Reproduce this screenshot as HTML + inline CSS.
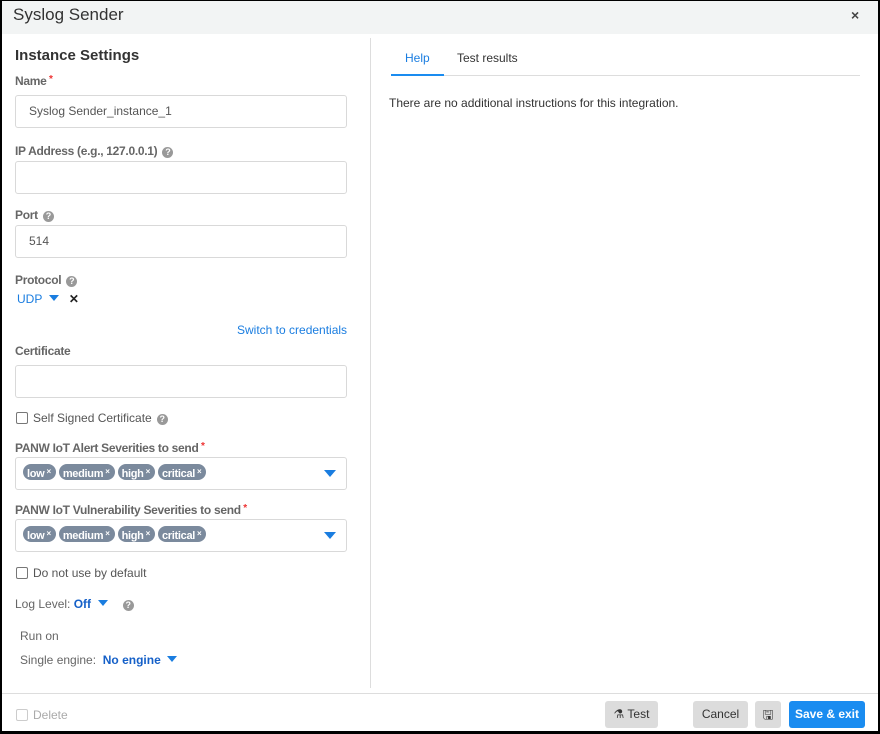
<!DOCTYPE html>
<html><head><meta charset="utf-8"><style>
*{box-sizing:border-box;margin:0;padding:0}
body{width:880px;height:734px;background:#000;position:relative;font-family:"Liberation Sans",sans-serif;overflow:hidden}
.win{position:absolute;left:2px;top:1px;width:876px;height:730px;background:#fff}
.hdr{position:absolute;left:0;top:0;width:876px;height:33px;background:#f2f4f4}
.a{position:absolute;white-space:nowrap}
.lbl{font-size:12px;color:#666;font-weight:bold;letter-spacing:-0.3px}
.in{position:absolute;left:13px;width:332px;height:33px;border:1px solid #d9d9d9;border-radius:3px;font-size:12px;color:#555;padding:8px 13px}
.q{display:inline-block;width:11px;height:11px;border-radius:50%;background:#999;color:#fff;font-size:9px;text-align:center;line-height:11px;font-weight:bold;vertical-align:0px;margin-left:5px}
.cb{display:inline-block;width:12px;height:12px;border:1px solid #777;border-radius:2px;vertical-align:-2px;margin-right:5px}
.tri{display:inline-block;width:0;height:0;border-left:5px solid transparent;border-right:5px solid transparent;border-top:6px solid #1a7de0;vertical-align:2px}
.tag{display:inline-block;background:#7b8a9d;color:#fff;font-size:11px;font-weight:bold;border-radius:8px;padding:1px 5px 1px 4px;margin-right:3px;letter-spacing:-0.3px;height:16px;line-height:14px}
.tag i{font-style:normal;font-size:8px;vertical-align:3px;margin-left:2px}
.btn{position:absolute;top:700px;height:27px;border-radius:3px;background:#dcdcdc;font-size:12px;color:#333;text-align:center;line-height:27px}
</style></head><body>
<div class="win">
<div class="hdr"></div>
<div class="a" style="left:11px;top:4px;font-size:17px;color:#333">Syslog Sender</div>
<div class="a" style="left:849px;top:6px;font-size:14px;color:#444;font-weight:bold">×</div>
<div class="a" style="left:368px;top:37px;width:1px;height:650px;background:#ddd"></div>
<div class="a" style="left:13px;top:46px;font-size:15px;font-weight:bold;color:#333">Instance Settings</div>
<div class="a lbl" style="left:13px;top:73px">Name<span style="color:#e33;vertical-align:3px;font-size:10px"> *</span></div>
<div class="in" style="top:94px">Syslog Sender_instance_1</div>
<div class="a lbl" style="left:13px;top:143px">IP Address (e.g., 127.0.0.1)<span class="q">?</span></div>
<div class="in" style="top:160px"></div>
<div class="a lbl" style="left:13px;top:207px">Port<span class="q">?</span></div>
<div class="in" style="top:224px">514</div>
<div class="a lbl" style="left:13px;top:272px">Protocol<span class="q">?</span></div>
<div class="a" style="left:15px;top:291px;font-size:12px;color:#1a7de0">UDP &nbsp;<span class="tri"></span> &nbsp; <span style="color:#222;font-weight:bold">✕</span></div>
<div class="a" style="left:235px;top:322px;font-size:12px;color:#1a7de0">Switch to credentials</div>
<div class="a lbl" style="left:13px;top:343px">Certificate</div>
<div class="in" style="top:364px"></div>
<div class="a" style="left:14px;top:410px;font-size:12px;color:#555"><span class="cb"></span>Self Signed Certificate<span class="q">?</span></div>
<div class="a lbl" style="left:13px;top:440px">PANW IoT Alert Severities to send<span style="color:#e33;font-size:10px;vertical-align:3px"> *</span></div>
<div class="in" style="top:456px;padding:6px 7px"><span class="tag">low<i>×</i></span><span class="tag">medium<i>×</i></span><span class="tag">high<i>×</i></span><span class="tag">critical<i>×</i></span><span class="tri" style="position:absolute;right:10px;top:12px;border-width:7px 6px 0 6px"></span></div>
<div class="a lbl" style="left:13px;top:502px">PANW IoT Vulnerability Severities to send<span style="color:#e33;font-size:10px;vertical-align:3px"> *</span></div>
<div class="in" style="top:518px;padding:6px 7px"><span class="tag">low<i>×</i></span><span class="tag">medium<i>×</i></span><span class="tag">high<i>×</i></span><span class="tag">critical<i>×</i></span><span class="tri" style="position:absolute;right:10px;top:12px;border-width:7px 6px 0 6px"></span></div>
<div class="a" style="left:14px;top:565px;font-size:12px;color:#555"><span class="cb"></span>Do not use by default</div>
<div class="a" style="left:13px;top:596px;font-size:12px;color:#666">Log Level: <b style="color:#1560c8">Off</b> &nbsp;<span class="tri"></span> &nbsp;&nbsp;<span class="q">?</span></div>
<div class="a" style="left:18px;top:628px;font-size:12px;color:#666">Run on</div>
<div class="a" style="left:18px;top:652px;font-size:12px;color:#666">Single engine: &nbsp;<b style="color:#1560c8">No engine</b> &nbsp;<span class="tri"></span></div>
<div class="a" style="left:403px;top:50px;font-size:12px;color:#1a7de0">Help</div>
<div class="a" style="left:455px;top:50px;font-size:12px;color:#333">Test results</div>
<div class="a" style="left:389px;top:74px;width:469px;height:1px;background:#ddd"></div>
<div class="a" style="left:389px;top:73px;width:53px;height:2px;background:#1a8cf0"></div>
<div class="a" style="left:387px;top:95px;font-size:12px;color:#333">There are no additional instructions for this integration.</div>
<div class="a" style="left:0;top:692px;width:876px;height:1px;background:#ddd"></div>
<div class="a" style="left:14px;top:707px;font-size:12px;color:#aaa"><span class="cb" style="border-color:#ccc"></span>Delete</div>
<div class="btn" style="left:603px;width:53px">⚗ Test</div>
<div class="btn" style="left:691px;width:55px">Cancel</div>
<div class="btn" style="left:753px;width:26px;font-size:13px">🖫</div>
<div class="btn" style="left:787px;width:76px;background:#1a8cf0;color:#fff;font-weight:bold">Save &amp; exit</div>
</div>
</body></html>
